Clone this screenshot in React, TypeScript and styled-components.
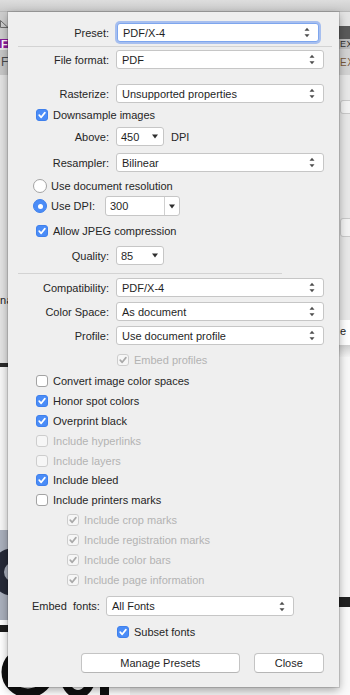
import React from 'react'
import styled, { createGlobalStyle, css } from 'styled-components'

const GlobalStyle = createGlobalStyle`
  html, body { margin: 0; padding: 0; }
  body {
    font-family: "Liberation Sans", Arial, Helvetica, sans-serif;
    font-size: 11px;
    color: #262626;
  }
`

// ---- backdrop (the document window behind the sheet) ----

const Screen = styled.div`
  position: relative;
  width: 350px;
  height: 695px;
  overflow: hidden;
  display: flex;
  flex-direction: column;
  background: #f6f6f6;
`

const Toolbar = styled.div`
  flex: none;
  height: 12px;
  box-sizing: border-box;
  background: linear-gradient(#dddddd, #cbcbcb);
  border-bottom: 1px solid #b8b8b8;
`

const Workspace = styled.div`
  flex: 1;
  display: flex;
`

const Pane = styled.div<{ $w: number }>`
  flex: none;
  width: ${p => p.$w}px;
  display: flex;
  flex-direction: column;
`

const Middle = styled.div`
  flex: 1;
  background: #f2f2f2;
`

const Band = styled.div<{ $h?: number; $bg: string; $fg?: string; $pad?: string }>`
  flex: ${p => (p.$h ? 'none' : '1')};
  height: ${p => (p.$h ? `${p.$h}px` : 'auto')};
  box-sizing: border-box;
  padding: ${p => p.$pad ?? '0'};
  background: ${p => p.$bg};
  color: ${p => p.$fg ?? '#333'};
  font-size: 11px;
  line-height: 1;
  display: flex;
  flex-direction: column;
  align-items: flex-start;
  overflow: hidden;
`

const BandText = styled.span<{ $size?: number; $bold?: boolean }>`
  font-size: ${p => p.$size ?? 11}px;
  font-weight: ${p => (p.$bold ? 700 : 400)};
  letter-spacing: 0.5px;
  white-space: nowrap;
`

const Stub = styled.div<{ $mt: number; $h: number }>`
  margin-top: ${p => p.$mt}px;
  height: ${p => p.$h}px;
  width: 40px;
  box-sizing: border-box;
  background: #f3f3f3;
  border: 1px solid #c9c9c9;
  border-radius: 3px;
`

// ---- the export sheet ----

const Sheet = styled.div`
  position: absolute;
  left: 8px;
  top: 12px;
  width: 331px;
  height: 675px;
  box-sizing: border-box;
  padding: 11px 15px 0 0;
  background: #efefef;
  box-shadow: 0 3px 9px rgba(0, 0, 0, 0.35), 0 0 0 1px rgba(0, 0, 0, 0.12);
  display: flex;
  flex-direction: column;
`

const FieldRow = styled.div<{ $mt: number; $h?: number }>`
  flex: none;
  display: grid;
  grid-template-columns: 101px 1fr;
  column-gap: 7px;
  align-items: center;
  height: ${p => p.$h ?? 19}px;
  margin-top: ${p => p.$mt}px;
`

const Label = styled.span`
  text-align: right;
  white-space: pre;
  color: #262626;
`

const Separator = styled.div<{ $mt: number; $w: number }>`
  flex: none;
  height: 1px;
  width: ${p => p.$w}px;
  margin: ${p => p.$mt}px 0 0 10px;
  background: #d3d3d3;
`

const PopUp = styled.div<{ $focus?: boolean; $w?: number }>`
  box-sizing: border-box;
  height: 100%;
  width: ${p => (p.$w ? `${p.$w}px` : 'auto')};
  display: flex;
  align-items: center;
  justify-content: space-between;
  padding: 0 8px 0 5px;
  background: #ffffff;
  border: 1px solid #c6c6c6;
  border-radius: 3px;
  color: #1f1f1f;
  white-space: nowrap;
  ${p =>
    p.$focus &&
    css`
      margin: 0 5px 0 1px;
      border-color: #7ea6ee;
      box-shadow: 0 0 0 2px rgba(118, 158, 238, 0.6);
    `}
`

const ComboGroup = styled.div`
  display: flex;
  align-items: center;
  gap: 7px;
  height: 100%;
`

const Combo = styled.div<{ $w: number; $split?: boolean }>`
  box-sizing: border-box;
  height: 100%;
  width: ${p => p.$w}px;
  display: flex;
  align-items: center;
  background: #ffffff;
  border: 1px solid #c6c6c6;
  border-radius: 3px;
  color: #1f1f1f;
`

const ComboValue = styled.span`
  flex: 1;
  padding-left: 4px;
`

const ComboButton = styled.span<{ $split?: boolean }>`
  flex: none;
  width: ${p => (p.$split ? 14 : 10)}px;
  height: 100%;
  display: flex;
  align-items: center;
  justify-content: center;
  border-left: ${p => (p.$split ? '1px solid #d0d0d0' : 'none')};
  padding-right: ${p => (p.$split ? 0 : 3)}px;
`

const CheckRow = styled.div<{ $indent: number; $mt: number; $disabled?: boolean }>`
  flex: none;
  display: flex;
  align-items: center;
  gap: 5px;
  height: 12px;
  margin-top: ${p => p.$mt}px;
  padding-left: ${p => p.$indent}px;
  color: ${p => (p.$disabled ? '#b3b3b3' : '#262626')};
  white-space: nowrap;
`

const Box = styled.span<{ $checked?: boolean; $disabled?: boolean }>`
  flex: none;
  box-sizing: border-box;
  width: 12px;
  height: 12px;
  border-radius: 3px;
  display: flex;
  align-items: center;
  justify-content: center;
  background: ${p => (p.$checked && !p.$disabled ? '#4a8cf7' : p.$disabled ? '#f6f6f6' : '#ffffff')};
  border: 1px solid
    ${p => (p.$checked && !p.$disabled ? '#3f80ec' : p.$disabled ? '#cdcdcd' : '#a3a3a3')};
`

const RadioRow = styled.div<{ $mt: number; $h: number }>`
  flex: none;
  display: flex;
  align-items: center;
  gap: 4px;
  height: ${p => p.$h}px;
  margin-top: ${p => p.$mt}px;
  padding-left: 25px;
  white-space: nowrap;
`

const Radio = styled.span<{ $on?: boolean }>`
  flex: none;
  box-sizing: border-box;
  width: 14px;
  height: 14px;
  border-radius: 50%;
  display: flex;
  align-items: center;
  justify-content: center;
  background: ${p => (p.$on ? '#4a8cf7' : '#ffffff')};
  border: 1px solid ${p => (p.$on ? '#3f80ec' : '#a3a3a3')};
  &::after {
    content: '';
    display: ${p => (p.$on ? 'block' : 'none')};
    width: 5px;
    height: 5px;
    border-radius: 50%;
    background: #ffffff;
  }
`

const RadioText = styled.span<{ $w?: number }>`
  width: ${p => (p.$w ? `${p.$w}px` : 'auto')};
`

const FontsRow = styled.div`
  flex: none;
  display: flex;
  align-items: center;
  gap: 6px;
  height: 20px;
  margin-top: 10px;
  padding-left: 24px;
  white-space: pre;
`

const ButtonRow = styled.div`
  flex: none;
  display: flex;
  gap: 14px;
  height: 20px;
  margin-top: 15px;
  padding-left: 73px;
`

const Button = styled.button<{ $w: number }>`
  box-sizing: border-box;
  width: ${p => p.$w}px;
  height: 100%;
  padding: 0;
  font: inherit;
  color: #1f1f1f;
  background: #ffffff;
  border: 1px solid #c4c4c4;
  border-bottom-color: #b6b6b6;
  border-radius: 4px;
`

// ---- small drawings ----

const UpDown = () => (
  <svg width="6" height="11" viewBox="0 0 6 11">
    <polygon points="0.5,3.8 3,0.8 5.5,3.8" fill="#4d4d4d" />
    <polygon points="0.5,7.2 3,10.2 5.5,7.2" fill="#4d4d4d" />
  </svg>
)

const Down = () => (
  <svg width="6" height="5" viewBox="0 0 6 5">
    <polygon points="0,0.5 6,0.5 3,4.5" fill="#2e2e2e" />
  </svg>
)

const Tick = ({ color }: { color: string }) => (
  <svg width="10" height="10" viewBox="0 0 10 10">
    <path d="M2.2 5.2 L4.2 7.3 L7.9 2.6" fill="none" stroke={color} strokeWidth="1.7" strokeLinecap="round" strokeLinejoin="round" />
  </svg>
)

const Logo = () => (
  <svg width="130" height="45" viewBox="0 0 130 45">
    <ellipse cx="28" cy="22" rx="22" ry="21" fill="none" stroke="#111" strokeWidth="9" />
    <ellipse cx="78" cy="25" rx="14" ry="19" fill="none" stroke="#111" strokeWidth="8" />
    <rect x="100" y="6" width="9" height="39" fill="#111" />
  </svg>
)

const Blob = () => (
  <svg width="60" height="90" viewBox="0 0 60 90">
    <circle cx="14" cy="42" r="24" fill="#262a38" />
    <circle cx="14" cy="42" r="10" fill="#aab0bd" />
  </svg>
)

// ---- data ----

type Check = { label: string; checked?: boolean; disabled?: boolean; indent: number; mt: number }

const mainChecks: Check[] = [
  { label: 'Convert image color spaces', indent: 28, mt: 9 },
  { label: 'Honor spot colors', checked: true, indent: 28, mt: 8 },
  { label: 'Overprint black', checked: true, indent: 28, mt: 8 },
  { label: 'Include hyperlinks', disabled: true, indent: 28, mt: 8 },
  { label: 'Include layers', disabled: true, indent: 28, mt: 8 },
  { label: 'Include bleed', checked: true, indent: 28, mt: 7 },
  { label: 'Include printers marks', indent: 28, mt: 8 },
  { label: 'Include crop marks', checked: true, disabled: true, indent: 59, mt: 8 },
  { label: 'Include registration marks', checked: true, disabled: true, indent: 59, mt: 8 },
  { label: 'Include color bars', checked: true, disabled: true, indent: 59, mt: 8 },
  { label: 'Include page information', checked: true, disabled: true, indent: 59, mt: 8 },
]

const CheckItem = ({ label, checked, disabled, indent, mt }: Check) => (
  <CheckRow $indent={indent} $mt={mt} $disabled={disabled}>
    <Box $checked={checked} $disabled={disabled}>
      {checked && <Tick color={disabled ? '#a9a9a9' : '#ffffff'} />}
    </Box>
    {label}
  </CheckRow>
)

const Select = ({ value, focus, w }: { value: string; focus?: boolean; w?: number }) => (
  <PopUp $focus={focus} $w={w}>
    <span>{value}</span>
    <UpDown />
  </PopUp>
)

const PopField = ({ label, value, mt, focus }: { label: string; value: string; mt: number; focus?: boolean }) => (
  <FieldRow $mt={mt}>
    <Label>{label}</Label>
    <Select value={value} focus={focus} />
  </FieldRow>
)

const ComboBox = ({ value, w, split }: { value: string; w: number; split?: boolean }) => (
  <Combo $w={w}>
    <ComboValue>{value}</ComboValue>
    <ComboButton $split={split}><Down /></ComboButton>
  </Combo>
)

export default function App() {
  return (
    <Screen>
      <GlobalStyle />
      <Toolbar />
      <Workspace>
        <Pane $w={130}>
          <Band $h={27} $bg="#cdcdcd" $pad="8px 0 0 0">
            <svg width="9" height="8" viewBox="0 0 9 8">
              <path d="M0.5 0.5 L8 7.5 L0.5 7.5 Z" fill="none" stroke="#6a6a6a" strokeWidth="1" />
            </svg>
          </Band>
          <Band $h={9} $bg="#8c1c9c" $fg="#ffffff" $pad="0 0 0 1px"><BandText $bold>F</BandText></Band>
          <Band $h={2} $bg="#e6e6e6" />
          <Band $h={25} $bg="#c7c7c7" $fg="#4a4a4a" $pad="6px 0 0 1px"><BandText $size={12}>F</BandText></Band>
          <Band $h={288} $bg="#e3e3e3" $fg="#222" $pad="220px 0 0 0"><BandText>na</BandText></Band>
          <Band $h={4} $bg="#2b2b2b" />
          <Band $h={163} $bg="#f7f7f7" />
          <Band $h={90} $bg="#aab0bd"><Blob /></Band>
          <Band $h={5} $bg="#ffffff" />
          <Band $h={7} $bg="#1d1d1d" />
          <Band $h={18} $bg="#ffffff" />
          <Band $bg="#ffffff"><Logo /></Band>
        </Pane>
        <Middle />
        <Pane $w={60}>
          <Band $h={14} $bg="#e4e4e4" />
          <Band $h={13} $bg="#5a5a5a" />
          <Band $h={10} $bg="#bdbdbd" $fg="#333" $pad="1px 0 0 50px"><BandText $size={9}>EX</BandText></Band>
          <Band $h={26} $bg="#d3d3d3" $fg="#7a5a3c" $pad="9px 0 0 50px"><BandText $size={10}>EX</BandText></Band>
          <Band $h={245} $bg="#e8e8e8" $pad="0 0 0 50px">
            <Stub $mt={25} $h={14} />
            <Stub $mt={104} $h={19} />
          </Band>
          <Band $h={25} $bg="#ffffff" $fg="#222" $pad="6px 0 0 50px"><BandText>e</BandText></Band>
          <Band $h={12} $bg="linear-gradient(#cfcfcf, #f4f4f4)" />
          <Band $h={240} $bg="#f8f8f8" />
          <Band $h={10} $bg="#222222" />
          <Band $bg="#fafafa" />
        </Pane>
      </Workspace>

      <Sheet>
        <PopField label="Preset:" value="PDF/X-4" mt={0} focus />
        <Separator $mt={4} $w={314} />
        <PopField label="File format:" value="PDF" mt={3} />
        <PopField label="Rasterize:" value="Unsupported properties" mt={15} />
        <CheckItem label="Downsample images" checked indent={28} mt={6} />
        <FieldRow $mt={6}>
          <Label>Above:</Label>
          <ComboGroup>
            <ComboBox value="450" w={48} />
            <span>DPI</span>
          </ComboGroup>
        </FieldRow>
        <PopField label="Resampler:" value="Bilinear" mt={7} />
        <RadioRow $mt={7} $h={14}>
          <Radio />
          <RadioText>Use document resolution</RadioText>
        </RadioRow>
        <RadioRow $mt={3} $h={20}>
          <Radio $on />
          <RadioText $w={50}>Use DPI:</RadioText>
          <ComboBox value="300" w={75} split />
        </RadioRow>
        <CheckItem label="Allow JPEG compression" checked indent={28} mt={9} />
        <FieldRow $mt={9}>
          <Label>Quality:</Label>
          <ComboGroup>
            <ComboBox value="85" w={48} />
          </ComboGroup>
        </FieldRow>
        <Separator $mt={8} $w={264} />
        <PopField label="Compatibility:" value="PDF/X-4" mt={4} />
        <PopField label="Color Space:" value="As document" mt={5} />
        <PopField label="Profile:" value="Use document profile" mt={5} />
        <CheckItem label="Embed profiles" checked disabled indent={109} mt={9} />
        {mainChecks.map(c => <CheckItem key={c.label} {...c} />)}
        <FontsRow>
          <span>{'Embed  fonts:'}</span>
          <Select value="All Fonts" w={188} />
        </FontsRow>
        <CheckItem label="Subset fonts" checked indent={109} mt={10} />
        <ButtonRow>
          <Button $w={160}>Manage Presets</Button>
          <Button $w={71}>Close</Button>
        </ButtonRow>
      </Sheet>
    </Screen>
  )
}
